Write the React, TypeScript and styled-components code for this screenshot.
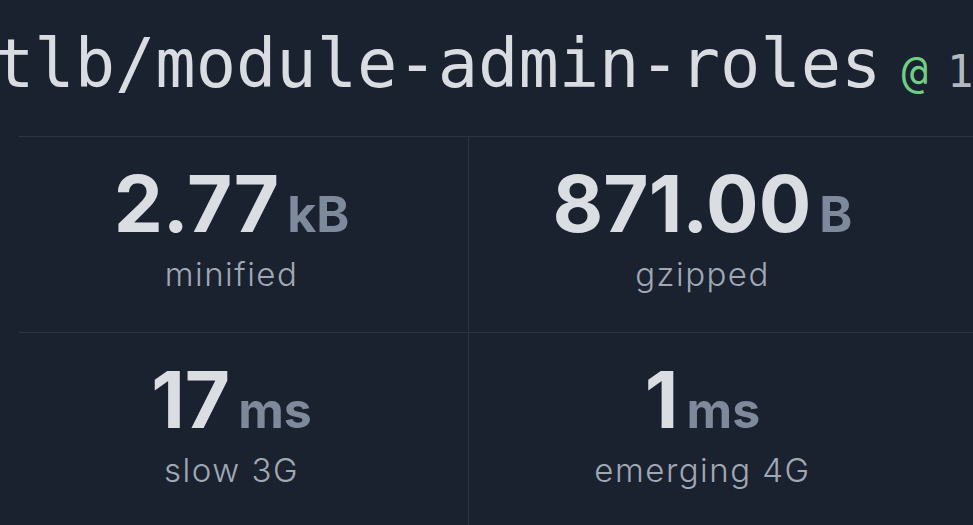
import React from 'react';
import styled, { createGlobalStyle } from 'styled-components';

interface Stat {
  value: string;
  unit: string;
  label: string;
}

const GlobalStyle = createGlobalStyle`
  html, body {
    margin: 0;
    padding: 0;
    background: #1a2230;
  }
  body {
    width: 973px;
    height: 525px;
    overflow: hidden;
  }
`;

const Page = styled.div`
  width: 973px;
  height: 525px;
  overflow: hidden;
  background: #1a2230;
`;

const Title = styled.h1`
  margin: 0 0 0 -6px;
  height: 136px;
  display: flex;
  align-items: baseline;
  padding-top: 31px;
  box-sizing: border-box;
  white-space: nowrap;
  font-family: 'DejaVu Sans Mono', 'Liberation Mono', monospace;
  font-weight: 400;
  font-size: 67px;
  line-height: 1;
  color: #d9dce1;
`;

const At = styled.span`
  font-size: 44px;
  color: #6fcf82;
  margin: 0 19px 0 20px;
`;

const Version = styled.span`
  font-size: 44px;
  color: #b3b9c3;
`;

const Row = styled.div`
  display: grid;
  grid-template-columns: 449px 468px;
  height: 195px;
  margin-left: 19px;
  border-top: 1px solid #2b3544;
`;

const Cell = styled.div<{ $first?: boolean }>`
  display: flex;
  flex-direction: column;
  align-items: center;
  padding-top: 28px;
  box-sizing: border-box;
  padding-right: ${(p) => (p.$first ? '24px' : '0')};
  border-left: ${(p) => (p.$first ? 'none' : '1px solid #2b3544')};
`;

const Value = styled.div`
  display: flex;
  align-items: baseline;
  font-family: Inter, 'Noto Sans', sans-serif;
  font-weight: 700;
  font-size: 78px;
  line-height: 1;
  color: #dadde2;
`;

const Unit = styled.span`
  font-size: 50px;
  margin-left: 8px;
  color: #7e899b;
`;

const Label = styled.div`
  margin-top: 12px;
  font-family: Inter, 'Noto Sans', sans-serif;
  font-weight: 300;
  font-size: 33px;
  letter-spacing: 1.5px;
  line-height: 1.2;
  color: #a0a8b4;
`;

const stats: Stat[][] = [
  [
    { value: '2.77', unit: 'kB', label: 'minified' },
    { value: '871.00', unit: 'B', label: 'gzipped' },
  ],
  [
    { value: '17', unit: 'ms', label: 'slow 3G' },
    { value: '1', unit: 'ms', label: 'emerging 4G' },
  ],
];

export default function App() {
  return (
    <Page>
      <GlobalStyle />
      <Title>
        tlb/module-admin-roles
        <At>@</At>
        <Version>1.0.0</Version>
      </Title>
      {stats.map((row, i) => (
        <Row key={i}>
          {row.map((stat, j) => (
            <Cell key={stat.label} $first={j === 0}>
              <Value>
                {stat.value}
                <Unit>{stat.unit}</Unit>
              </Value>
              <Label>{stat.label}</Label>
            </Cell>
          ))}
        </Row>
      ))}
    </Page>
  );
}
